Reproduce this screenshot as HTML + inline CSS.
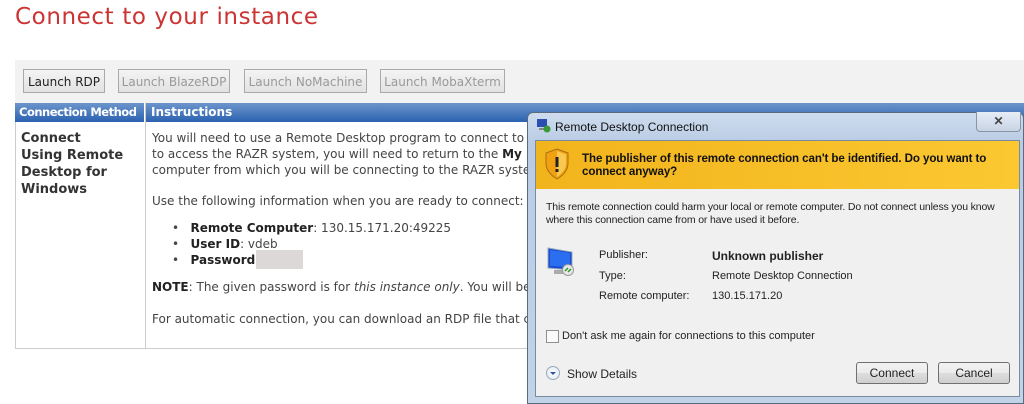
<!DOCTYPE html>
<html><head><meta charset="utf-8"><style>
body{margin:0;width:1024px;height:404px;background:#fff;position:relative;overflow:hidden;font-family:"DejaVu Sans",Verdana,sans-serif;}
.title{position:absolute;left:15px;top:4px;font-size:23px;color:#cc3333;letter-spacing:0.6px}
.band{position:absolute;left:15px;top:60px;width:1009px;height:43px;background:#f2f2f2}
.btn{position:absolute;top:69px;height:24px;border:1px solid #a9a9a9;background:linear-gradient(#f4f4f4,#e2e2e2);font-size:12px;line-height:24px;text-align:center;color:#999;box-sizing:border-box;white-space:nowrap}
.tbl{position:absolute;left:15px;top:103px;width:1009px;height:246px;border:1px solid #ccc;border-top:none;box-sizing:border-box}
.hd{position:absolute;top:103px;height:19px;background:linear-gradient(#6d95cc,#2a61b0);color:#fff;font-weight:bold;font-size:12px;line-height:19px;padding-left:5px;box-sizing:border-box;white-space:nowrap;overflow:hidden}
.txt{position:absolute;font-size:12px;color:#444;line-height:16px;white-space:nowrap}
b{color:#222}
.dlg{position:absolute;left:527px;top:112px;width:497px;height:292px;border:1px solid #5a6a80;border-radius:6px 6px 0 0;background:linear-gradient(#cfdcee,#b9cce4 30px,#c2d3e8);box-sizing:border-box}
.in{position:absolute;left:535px;top:140px;width:485px;height:257px;background:#f0f0f0;border:1px solid #7a8aa0;box-sizing:border-box}
.d{position:absolute;font-family:"Liberation Sans",Arial,sans-serif;font-size:11px;color:#222;white-space:nowrap}
.db{position:absolute;top:362px;height:22px;border:1px solid #707070;border-radius:3px;background:linear-gradient(#f2f2f2,#ebebeb 50%,#dddddd 51%,#cfcfcf);font-family:"Liberation Sans",Arial,sans-serif;font-size:12px;line-height:21px;text-align:center;color:#222;box-sizing:border-box}
</style></head><body>
<div class="title">Connect to your instance</div>
<div class="band"></div>
<div class="btn" style="left:23px;width:82px;color:#222">Launch RDP</div>
<div class="btn" style="left:118px;width:112px">Launch BlazeRDP</div>
<div class="btn" style="left:244px;width:123px">Launch NoMachine</div>
<div class="btn" style="left:380px;width:125px">Launch MobaXterm</div>
<div class="tbl"></div>
<div style="position:absolute;left:145px;top:103px;width:1px;height:245px;background:#ccc"></div>
<div class="hd" style="left:15px;width:129px;font-size:11.5px;letter-spacing:-0.5px;padding-left:4px">Connection Method</div>
<div class="hd" style="left:146px;width:878px">Instructions</div>
<div class="txt" style="left:21px;top:130px;font-weight:bold;font-size:13px;color:#333;line-height:17px">Connect<br>Using Remote<br>Desktop for<br>Windows</div>
<div class="txt" style="left:152px;top:130px">You will need to use a Remote Desktop program to connect to<br>to access the RAZR system, you will need to return to the <b>My I</b><br>computer from which you will be connecting to the RAZR syste</div>
<div class="txt" style="left:152px;top:193px">Use the following information when you are ready to connect:</div>
<div class="txt" style="left:172px;top:220px">•&nbsp;&nbsp;&nbsp;<b>Remote Computer</b>: 130.15.171.20:49225<br>•&nbsp;&nbsp;&nbsp;<b>User ID</b>: vdeb<br>•&nbsp;&nbsp;&nbsp;<b>Password</b>:</div>
<div style="position:absolute;left:256px;top:250px;width:47px;height:19px;background:#dcd8d8"></div>
<div class="txt" style="left:152px;top:279px"><b>NOTE</b>: The given password is for <i>this instance only</i>. You will be</div>
<div class="txt" style="left:152px;top:311px">For automatic connection, you can download an RDP file that c</div>

<div class="dlg"></div>
<svg style="position:absolute;left:537px;top:119px" width="14" height="14"><rect x="0" y="0" width="10" height="8" fill="#2a4fb0"/><rect x="2" y="9" width="6" height="2" fill="#888"/><circle cx="10" cy="10" r="3.5" fill="#3a9a3a"/></svg>
<div class="d" style="left:555px;top:120px;font-size:12px;color:#111">Remote Desktop Connection</div>
<div style="position:absolute;left:976px;top:112px;width:43px;height:19px;border:1px solid #8895a8;border-top:none;border-radius:0 0 4px 4px;background:linear-gradient(#e6edf6,#c8d4e4);font:bold 12px 'Liberation Sans',sans-serif;color:#444;text-align:center;line-height:18px">✕</div>
<div class="in"></div>
<div style="position:absolute;left:536px;top:141px;width:483px;height:48px;background:linear-gradient(90deg,#f2b41c,#fbc832)"></div>
<svg style="position:absolute;left:545px;top:148px" width="24" height="32" viewBox="0 0 24 32"><path d="M12 1 L23 5 L23 15 C23 23 17 28 12 31 C7 28 1 23 1 15 L1 5 Z" fill="#f0a010" stroke="#a87010"/><path d="M12 3 L21 6.5 L21 15 C21 22 16 26 12 29 Z" fill="#f8c850"/><rect x="10.5" y="9" width="3" height="10" fill="#222"/><rect x="10.5" y="21" width="3" height="3" fill="#222"/></svg>
<div class="d" style="left:582px;top:152px;font-size:11.6px;font-weight:bold;line-height:13px;color:#111;letter-spacing:-0.1px">The publisher of this remote connection can't be identified. Do you want to<br>connect anyway?</div>
<div class="d" style="left:546px;top:201px;line-height:13px;font-size:10.5px;letter-spacing:-0.15px">This remote connection could harm your local or remote computer. Do not connect unless you know<br>where this connection came from or have used it before.</div>
<svg style="position:absolute;left:546px;top:246px" width="32" height="32"><path d="M2 2 L26 6 L26 24 L2 22 Z" fill="#1a4ad0" stroke="#9ab"/><path d="M4 4 L24 7 L24 21 L4 20 Z" fill="#2c6ef0"/><rect x="8" y="24" width="12" height="4" fill="#aaa"/><circle cx="22" cy="24" r="5.5" fill="#e8e8e8" stroke="#999"/><path d="M19 25 L22 22 M22 26 L25 23" stroke="#2a9a2a" stroke-width="1.5"/></svg>
<div class="d" style="left:599px;top:249px">Publisher:</div>
<div class="d" style="left:712px;top:249px;font-weight:bold;font-size:12px">Unknown publisher</div>
<div class="d" style="left:599px;top:270px">Type:</div>
<div class="d" style="left:712px;top:270px">Remote Desktop Connection</div>
<div class="d" style="left:599px;top:290px">Remote computer:</div>
<div class="d" style="left:712px;top:290px">130.15.171.20</div>
<div style="position:absolute;left:546px;top:330px;width:11px;height:11px;border:1px solid #8f8f8f;background:#fafafa"></div>
<div class="d" style="left:562px;top:330px">Don't ask me again for connections to this computer</div>
<div style="position:absolute;left:546px;top:366px;width:14px;height:14px;border-radius:50%;border:1px solid #9ab;background:radial-gradient(#fff,#dde6f2);box-sizing:border-box"></div>
<div style="position:absolute;left:550px;top:372px;width:0;height:0;border-left:3px solid transparent;border-right:3px solid transparent;border-top:3px solid #3050a0"></div>
<div class="d" style="left:567px;top:367px;font-size:12px">Show Details</div>
<div class="db" style="left:856px;width:72px">Connect</div>
<div class="db" style="left:938px;width:72px">Cancel</div>
</body></html>
